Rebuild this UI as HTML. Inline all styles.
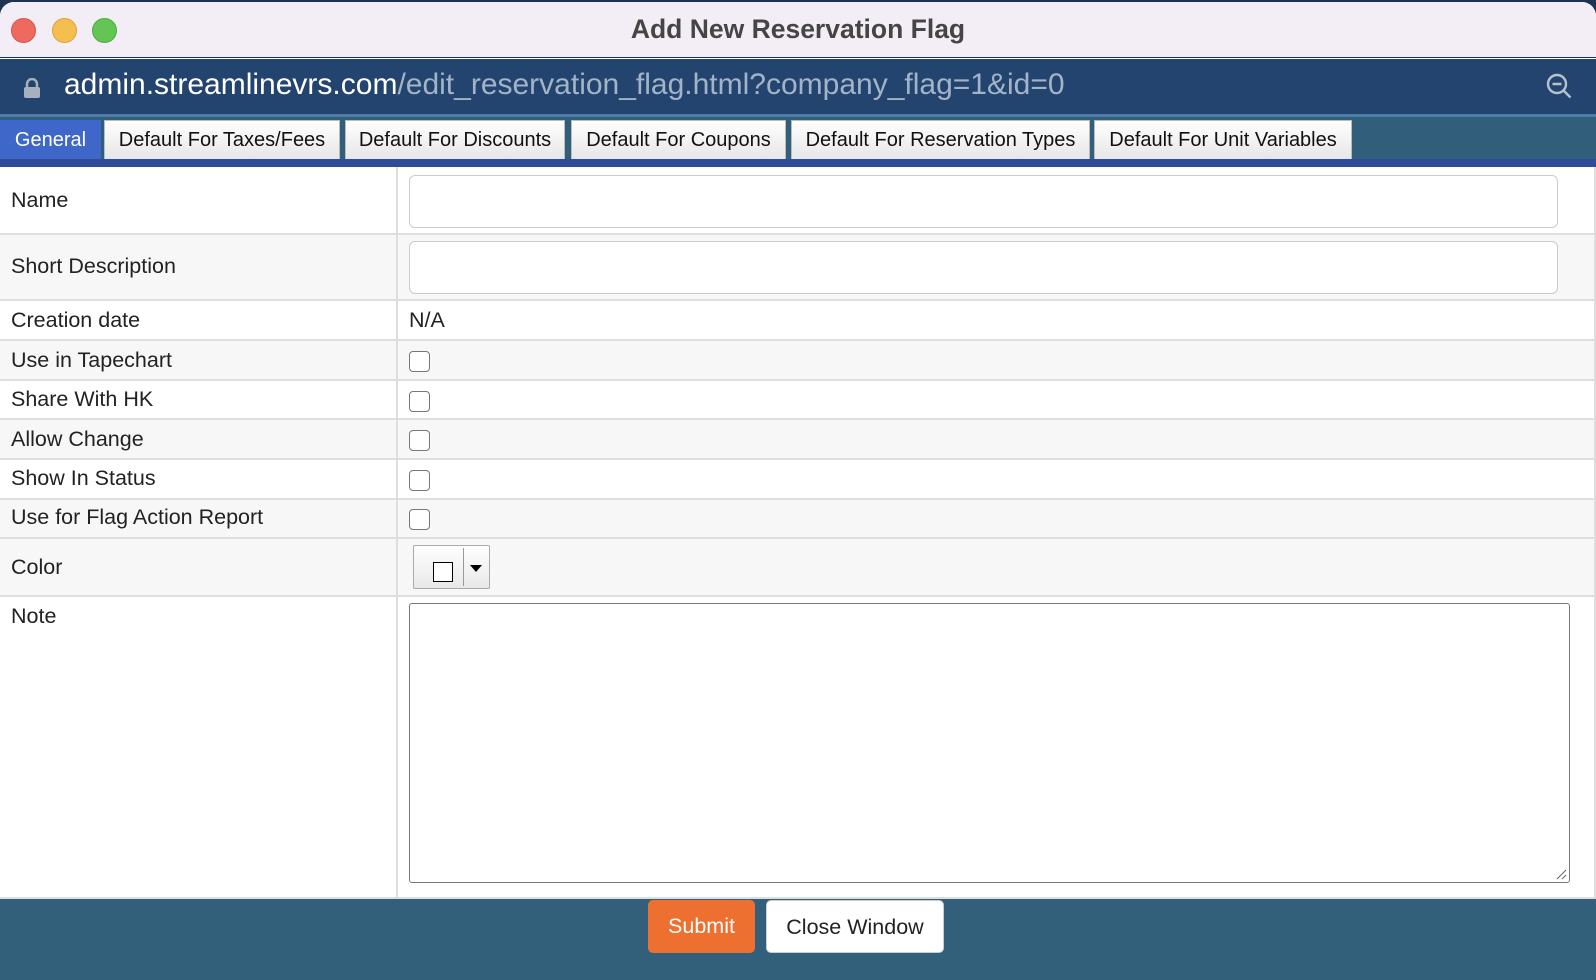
<!DOCTYPE html>
<html><head><style>
*{box-sizing:border-box;margin:0;padding:0}
body{width:1596px;height:980px;overflow:hidden;background:#1d3354;font-family:"Liberation Sans",Arial,sans-serif;position:relative}
.win{position:absolute;left:0;top:2px;width:1596px;height:978px;border-radius:14px 14px 0 0;overflow:hidden;background:#fff}
.title{position:absolute;left:0;top:0;width:1596px;height:56px;background:#f3eef6;border-bottom:1px solid #1c3150}
.dot{position:absolute;top:16px;width:25px;height:25px;border-radius:50%}
.title h1{position:absolute;left:0;right:0;top:12px;text-align:center;font-size:26.5px;font-weight:bold;color:#454545}
.url{position:absolute;left:0;top:57px;width:1596px;height:55px;background:#23446e}
.url span{position:absolute;left:64px;top:9px;font-size:30px;color:#fff;white-space:nowrap}
.url span i{font-style:normal;color:#a3b3c8}
.line{position:absolute;left:0;top:112px;width:1596px;height:3px;background:#4f7fa8}
.tabs{position:absolute;left:0;top:115px;width:1596px;height:42px;background:#315f7b}
.tab{position:absolute;top:3px;height:39px;background:linear-gradient(#fff,#e6e6e6);border:1px solid #bbb;border-bottom:none;font-size:20px;color:#111;text-align:center;line-height:38px;white-space:nowrap}
.strip{position:absolute;left:0;top:157px;width:1596px;height:10px;background:#2f4c9b}
.row{position:absolute;left:0;width:1594px;border-bottom:2px solid #dedede}
.row .l{position:absolute;left:11px;font-size:21.5px;color:#222;white-space:nowrap}
.div{position:absolute;left:396px;top:167px;width:2px;height:730px;background:#dedede}
.inp{position:absolute;left:409px;width:1149px;height:53px;border:1px solid #ccc;border-radius:6px;background:#fff}
.cb{position:absolute;left:409px;width:21px;height:21px;border:1.5px solid #777;border-radius:4px;background:#fff}
.foot{position:absolute;left:0;top:899px;width:1596px;height:81px;background:#325f7a}
.btn{position:absolute;top:1px;height:53px;border-radius:5px;font-size:21.5px;line-height:53px;text-align:center}
</style></head><body>
<div class="win">
<div class="title">
<div class="dot" style="left:11px;background:#ee6a5f;border:1px solid #d9534a"></div>
<div class="dot" style="left:52px;background:#f5bf4f;border:1px solid #dca33b"></div>
<div class="dot" style="left:92px;background:#62c554;border:1px solid #4fab43"></div>
<h1>Add New Reservation Flag</h1>
</div>
<div class="url">
<svg style="position:absolute;left:23px;top:19px" width="18" height="20" viewBox="0 0 18 20"><path d="M4 9V6a5 5 0 0 1 10 0v3" fill="none" stroke="#a8b0bb" stroke-width="2.5"/><rect x="1" y="9" width="16" height="11" rx="2" fill="#a8b0bb"/></svg>
<span>admin.streamlinevrs.com<i>/edit_reservation_flag.html?company_flag=1&amp;id=0</i></span>
<svg style="position:absolute;left:1545px;top:13px" width="30" height="30" viewBox="0 0 30 30"><circle cx="12" cy="12" r="9" fill="none" stroke="#b8c2cf" stroke-width="2.4"/><path d="M7.5 12h9M18.5 18.5l7 7" stroke="#b8c2cf" stroke-width="2.4"/></svg>
</div>
<div class="line"></div>
<div class="tabs">
<div class="tab" style="left:0;width:101px;background:#3f67c9;color:#fff;border-color:#3f67c9">General</div>
<div class="tab" style="left:104px;width:236px">Default For Taxes/Fees</div>
<div class="tab" style="left:345px;width:220px">Default For Discounts</div>
<div class="tab" style="left:571px;width:215px">Default For Coupons</div>
<div class="tab" style="left:791px;width:299px">Default For Reservation Types</div>
<div class="tab" style="left:1094px;width:258px">Default For Unit Variables</div>
</div>
<div class="strip"></div>
</div>
<div style="position:absolute;left:0;top:167px;width:1596px;height:732px;background:#fff;border-right:2px solid #dedede"></div>
<div class="row" style="top:167px;height:68px;background:#fff"><div class="l" style="top:21px">Name</div></div>
<div class="row" style="top:235px;height:66px;background:#f7f7f7"><div class="l" style="top:19px">Short Description</div></div>
<div class="row" style="top:301px;height:40px;background:#fff"><div class="l" style="top:7px">Creation date</div><div class="l" style="left:409px;top:7px">N/A</div></div>
<div class="row" style="top:341px;height:40px;background:#f7f7f7"><div class="l" style="top:7px">Use in Tapechart</div></div>
<div class="row" style="top:381px;height:39px;background:#fff"><div class="l" style="top:6px">Share With HK</div></div>
<div class="row" style="top:420px;height:40px;background:#f7f7f7"><div class="l" style="top:7px">Allow Change</div></div>
<div class="row" style="top:460px;height:40px;background:#fff"><div class="l" style="top:6px">Show In Status</div></div>
<div class="row" style="top:500px;height:39px;background:#f7f7f7"><div class="l" style="top:5px">Use for Flag Action Report</div></div>
<div class="row" style="top:539px;height:58px;background:#f7f7f7"><div class="l" style="top:16px">Color</div></div>
<div class="row" style="top:597px;height:302px;background:#fff"><div class="l" style="top:7px">Note</div></div>
<div class="div"></div>
<div class="inp" style="top:175px"></div>
<div class="inp" style="top:241px"></div>
<div class="cb" style="top:351px"></div>
<div class="cb" style="top:391px"></div>
<div class="cb" style="top:430px"></div>
<div class="cb" style="top:470px"></div>
<div class="cb" style="top:509px"></div>
<div style="position:absolute;left:413px;top:545px;width:77px;height:44px;border:1px solid #aaa;border-radius:2px;background:linear-gradient(#fff,#e8e8e8)">
<div style="position:absolute;left:19px;top:16px;width:20px;height:20px;border:1.5px solid #000;background:#fff"></div>
<div style="position:absolute;left:49px;top:2px;width:1px;height:38px;background:#999"></div>
<div style="position:absolute;left:56px;top:19px;width:0;height:0;border-left:6px solid transparent;border-right:6px solid transparent;border-top:7px solid #000"></div>
</div>
<div style="position:absolute;left:409px;top:603px;width:1161px;height:280px;border:1px solid #777;border-radius:3px;background:#fff">
<svg style="position:absolute;right:2px;bottom:2px" width="12" height="12"><path d="M11 2L2 11M11 7L7 11" stroke="#666" stroke-width="1"/></svg>
</div>
<div class="foot">
<div class="btn" style="left:648px;width:107px;background:#ee7030;color:#fff">Submit</div>
<div class="btn" style="left:766px;width:178px;background:#fff;color:#222;border:1px solid #ccc">Close Window</div>
</div>
</body></html>
